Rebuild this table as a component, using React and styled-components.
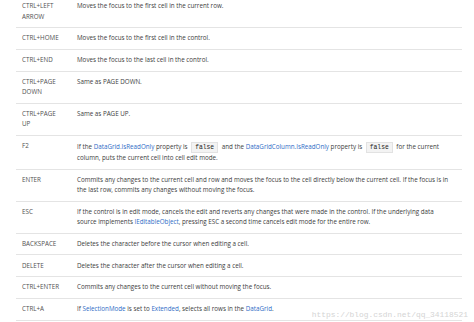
import React from "react";
import styled, { createGlobalStyle } from "styled-components";

const GlobalStyle = createGlobalStyle`
  html, body { margin: 0; padding: 0; background: #ffffff; }
  body { overflow: hidden; width: 474px; height: 322px; }
  #root { position: relative; width: 474px; height: 322px; overflow: hidden; }
`;

const Page = styled.div`
  position: relative;
  width: 474px;
  height: 322px;
  overflow: hidden;
  font-family: "Open Sans", "Noto Sans", sans-serif;
  font-size: 6.25px;
  color: #3c3c3c;
`;

const Table = styled.div`
  margin: -4px 0 0 16px;
  width: 446px;
  display: flex;
  flex-direction: column;
`;

const Row = styled.div`
  display: grid;
  grid-template-columns: 56px 1fr;
  border-bottom: 1px solid #e4e4e4;
  padding: 5.3px 0;
`;

const KeyCell = styled.div`
  padding-left: 6px;
  color: #505050;
`;

const DescCell = styled.div`
  padding-left: 5px;
  padding-right: 8px;
`;

const Line = styled.div`
  line-height: ${(p) => (p.$tall ? "12.2px" : "10.2px")};
  white-space: nowrap;
`;

const Link = styled.span`
  color: #2e6bc6;
`;

const Code = styled.span`
  display: inline-block;
  font-family: "Liberation Mono", "DejaVu Sans Mono", monospace;
  font-size: 6.3px;
  line-height: 9px;
  padding: 0 3px;
  margin: 0 2px;
  background: #f3f3f3;
  border: 1px solid #e2e2e2;
  color: #222;
`;

const Watermark = styled.div`
  position: absolute;
  right: 6px;
  bottom: 3px;
  font-family: "Liberation Mono", "Courier New", monospace;
  font-size: 7.9px;
  color: #d4d4d4;
  white-space: nowrap;
`;

const T = (s) => ({ t: s });
const L = (s) => ({ link: s });
const C = (s) => ({ code: s });

const rows = [
  { key: ["CTRL+LEFT", "ARROW"], desc: [[T("Moves the focus to the first cell in the current row.")]] },
  { key: ["CTRL+HOME"], desc: [[T("Moves the focus to the first cell in the control.")]] },
  { key: ["CTRL+END"], desc: [[T("Moves the focus to the last cell in the control.")]] },
  { key: ["CTRL+PAGE", "DOWN"], desc: [[T("Same as PAGE DOWN.")]] },
  { key: ["CTRL+PAGE", "UP"], desc: [[T("Same as PAGE UP.")]] },
  {
    key: ["F2"],
    tall: true,
    desc: [
      [
        T("If the "),
        L("DataGrid.IsReadOnly"),
        T(" property is "),
        C("false"),
        T(" and the "),
        L("DataGridColumn.IsReadOnly"),
        T(" property is "),
        C("false"),
        T(" for the current"),
      ],
      [T("column, puts the current cell into cell edit mode.")],
    ],
  },
  {
    key: ["ENTER"],
    desc: [
      [T("Commits any changes to the current cell and row and moves the focus to the cell directly below the current cell. If the focus is in")],
      [T("the last row, commits any changes without moving the focus.")],
    ],
  },
  {
    key: ["ESC"],
    desc: [
      [T("If the control is in edit mode, cancels the edit and reverts any changes that were made in the control. If the underlying data")],
      [T("source implements "), L("IEditableObject"), T(", pressing ESC a second time cancels edit mode for the entire row.")],
    ],
  },
  { key: ["BACKSPACE"], desc: [[T("Deletes the character before the cursor when editing a cell.")]] },
  { key: ["DELETE"], desc: [[T("Deletes the character after the cursor when editing a cell.")]] },
  { key: ["CTRL+ENTER"], desc: [[T("Commits any changes to the current cell without moving the focus.")]] },
  {
    key: ["CTRL+A"],
    desc: [[T("If "), L("SelectionMode"), T(" is set to "), L("Extended"), T(", selects all rows in the "), L("DataGrid"), T(".")]],
  },
];

function Segment({ s }) {
  if (s.link) return <Link>{s.link}</Link>;
  if (s.code) return <Code>{s.code}</Code>;
  return <>{s.t}</>;
}

export default function App() {
  return (
    <>
      <GlobalStyle />
      <Page>
        <Table>
          {rows.map((r, i) => (
            <Row key={i}>
              <KeyCell>
                {r.key.map((k, j) => (
                  <Line key={j}>{k}</Line>
                ))}
              </KeyCell>
              <DescCell>
                {r.desc.map((line, j) => (
                  <Line key={j} $tall={r.tall && j === 0}>
                    {line.map((s, k) => (
                      <Segment key={k} s={s} />
                    ))}
                  </Line>
                ))}
              </DescCell>
            </Row>
          ))}
        </Table>
        <Watermark>https://blog.csdn.net/qq_34118521</Watermark>
      </Page>
    </>
  );
}
